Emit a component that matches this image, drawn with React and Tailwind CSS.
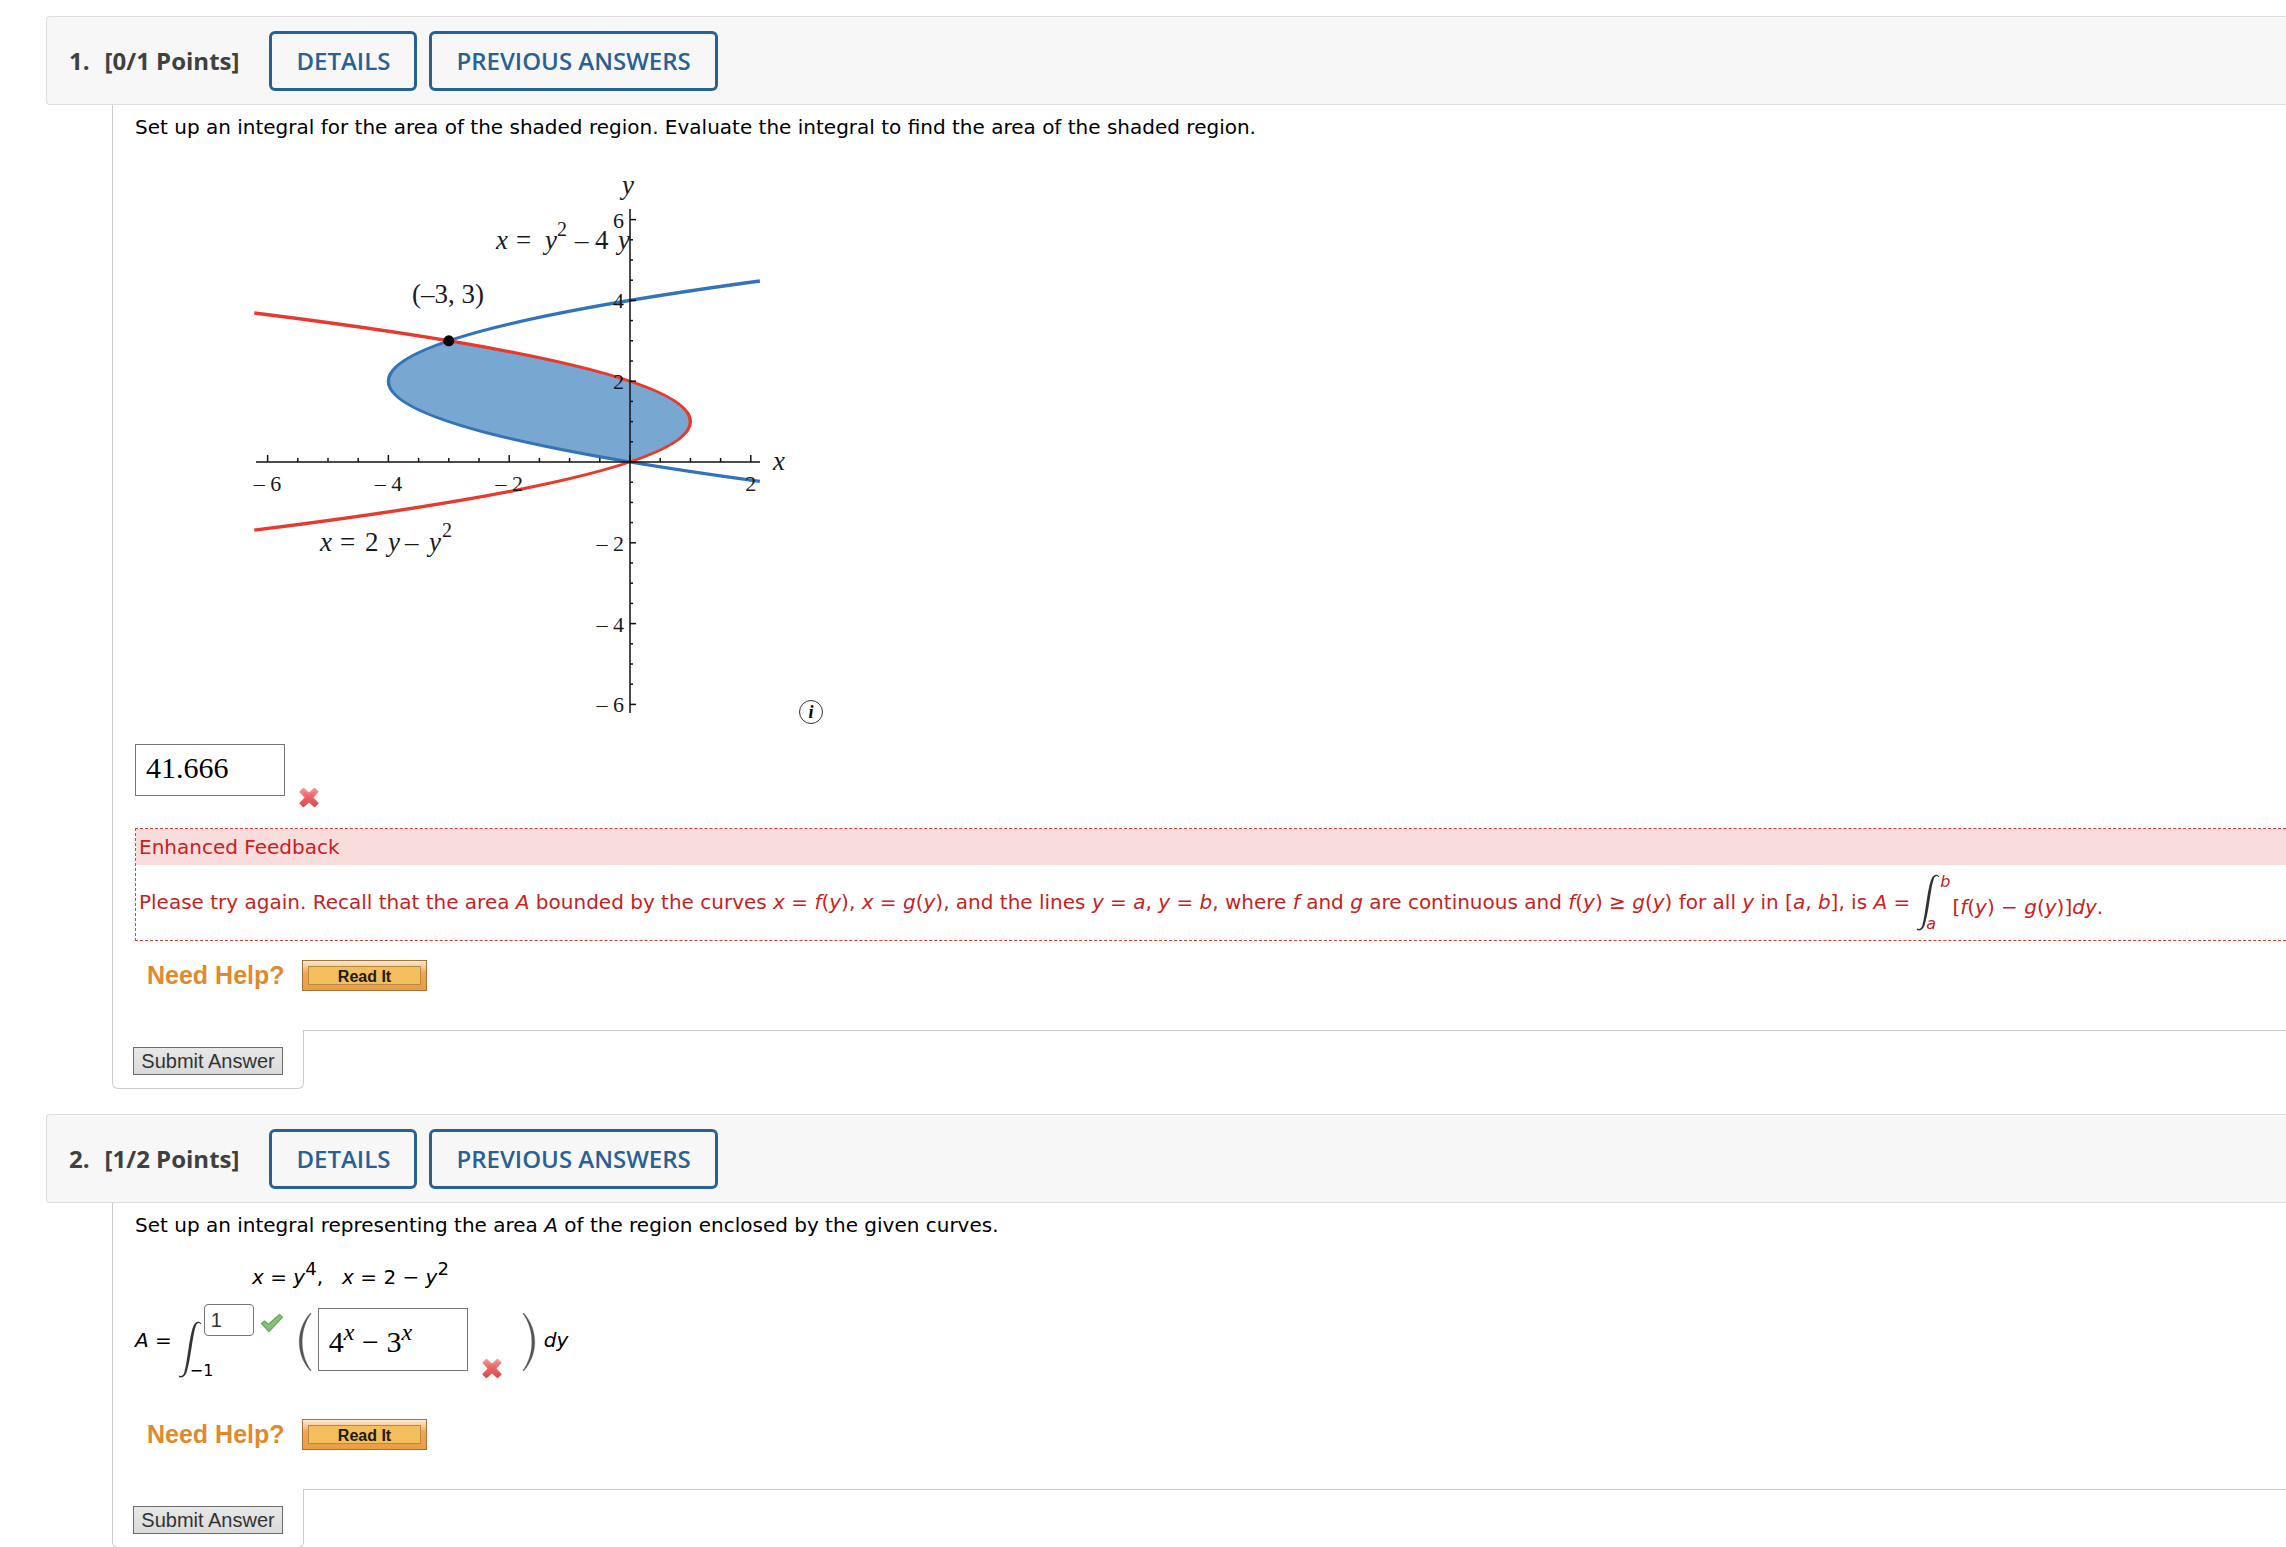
import React from "react";

const OX = 495;
const OY = 312;

const px = (x) => OX + x * 60.4;
const py = (y) => OY - y * 40.4;

// x = y^2 - 4y and x = 2y - y^2 as quadratic beziers between two y values
const blueTo = (a, b) =>
  `Q${px(a * b - 2 * (a + b))} ${py((a + b) / 2)} ${px(b * b - 4 * b)} ${py(b)}`;
const redTo = (a, b) =>
  `Q${px(a + b - a * b)} ${py((a + b) / 2)} ${px(2 * b - b * b)} ${py(b)}`;

const xTicks = Array.from({ length: 17 }, (_, i) => -6 + i / 2);
const yTicks = Array.from({ length: 25 }, (_, i) => -6 + i / 2);
const isMajor = (n) => n % 2 === 0;

const Graph = () => {
  const label = (n) => (n < 0 ? `– ${-n}` : n);

  return (
    <svg
      width="660"
      height="570"
      viewBox="0 0 660 570"
      role="img"
      aria-label="Region between two parabolas"
      className="shrink-0 font-['Liberation_Serif',serif]"
      fill="#1a1a1a"
    >
      <path
        d={`M${px(-3)} ${py(3)} ${blueTo(3, 0)} ${redTo(0, 3)}Z`}
        fill="#78a7d1"
      />
      <path
        d={`M${px(2.15)} ${py(-0.48)} ${blueTo(-0.48, 4.48)}`}
        fill="none"
        stroke="#3273b9"
        strokeWidth="3.4"
      />
      <path
        d={`M${px(-6.22)} ${py(-1.687)} ${redTo(-1.687, 3.687)}`}
        fill="none"
        stroke="#e8392f"
        strokeWidth="3.4"
      />
      <g stroke="#111" strokeWidth="1.5">
        <path d={`M121 ${OY}H625M${OX} 59V563`} />
        {xTicks.map((t) => (
          <path key={t} d={`M${px(t)} ${OY}v${isMajor(t) ? -7 : -4}`} />
        ))}
        {yTicks.map((t) => (
          <path key={t} d={`M${OX} ${py(t)}h${isMajor(t) ? 6 : 3}`} />
        ))}
      </g>
      <circle cx={px(-3)} cy={py(3)} r="5.5" fill="#000" />

      <g fontSize="22" textAnchor="middle">
        {[-6, -4, -2, 2].map((t) => (
          <text key={t} x={px(t)} y="341">
            {label(t)}
          </text>
        ))}
      </g>
      <g fontSize="22" textAnchor="end">
        {[-6, -4, -2, 2, 4, 6].map((t) => (
          <text key={t} x="489" y={py(t) + 8}>
            {label(t)}
          </text>
        ))}
      </g>

      <g fontSize="27">
        <text x="487" y="44" fontStyle="italic">y</text>
        <text x="638" y="320" fontStyle="italic">x</text>
        <text x="277" y="153">(–3, 3)</text>
        <text y="99">
          <tspan x="361" fontStyle="italic">x</tspan>
          <tspan x="381">=</tspan>
          <tspan x="410" fontStyle="italic">y</tspan>
          <tspan x="422" y="86" fontSize="20">2</tspan>
          <tspan x="440" y="99">–</tspan>
          <tspan x="460">4</tspan>
          <tspan x="483" fontStyle="italic">y</tspan>
        </text>
        <text y="401">
          <tspan x="185" fontStyle="italic">x</tspan>
          <tspan x="205">=</tspan>
          <tspan x="230">2</tspan>
          <tspan x="253" fontStyle="italic">y</tspan>
          <tspan x="270">–</tspan>
          <tspan x="294" fontStyle="italic">y</tspan>
          <tspan x="307" y="387" fontSize="20">2</tspan>
        </text>
      </g>
    </svg>
  );
};

const Wrong = () => (
  <svg width="20" height="21" viewBox="0 0 20 21" role="img" aria-label="Incorrect" className="shrink-0">
    <defs>
      <linearGradient id="wrong" x1="0" y1="0" x2="0" y2="1">
        <stop offset="0" stopColor="#f39a9a" />
        <stop offset="0.5" stopColor="#e86464" />
        <stop offset="1" stopColor="#dd4a4a" />
      </linearGradient>
    </defs>
    <path
      d="M4.500 1.500 10 6.600 15.500 1.500 18.800 4.800 13.400 10.500 18.800 16.200 15.600 19.500 10 14.300 4.400 19.500 1.200 16.200 6.600 10.500 1.200 4.800Z"
      fill="url(#wrong)"
      stroke="url(#wrong)"
      strokeWidth="1.6"
      strokeLinejoin="round"
    />
    <path
      d="M4.600 4.800 10 10.300 15.400 4.800M5 16 10 10.900 15 16"
      fill="none"
      stroke="#e25a5a"
      strokeWidth="1"
      opacity="0.6"
    />
  </svg>
);

const Right = () => (
  <svg width="24" height="20" viewBox="0 0 24 20" role="img" aria-label="Correct" className="shrink-0">
    <path
      d="M1.500 10.500 4.500 8 8.500 11.200 19.500 1.500 22.500 4.200 9 18.500Z"
      fill="#85c277"
      stroke="#68a95d"
      strokeWidth="1.2"
      strokeLinejoin="round"
    />
  </svg>
);

const Integral = () => (
  <svg width="24" height="58" viewBox="0 0 24 58" aria-hidden="true" className="shrink-0">
    <path
      d="M22.500 3.200C21.500 1.500 19 1.500 17.800 5 14.500 14 12.500 41 8.500 51.500 6.800 56 3.500 57.300 .8 56L1.200 54.600C3.500 55.600 5.300 54.500 6.300 51.500 9.500 41 11.500 13 15.700 4.500 17.500 .2 21.500-.2 23.200 2.400Z"
      fill="#333"
    />
  </svg>
);

const Paren = ({ flip }) => (
  <svg width="14" height="60" viewBox="0 0 14 60" aria-hidden="true" className="shrink-0">
    <path
      d={
        flip
          ? "M1.500 1C16.500 17 16.500 43 1.500 59L.8 58.400C12.800 43 12.800 17 .8 1.600Z"
          : "M12.500 1C-2.500 17-2.500 43 12.500 59L13.200 58.400C1.200 43 1.200 17 13.200 1.600Z"
      }
      fill="#555"
      stroke="#555"
      strokeWidth="0.3"
    />
  </svg>
);

const HeaderButton = ({ children }) => (
  <button
    type="button"
    className="h-[60px] rounded-md border-[3px] border-[#286195] px-6 text-2xl font-semibold text-[#286195]"
  >
    {children}
  </button>
);

const Question = ({ number, points, children }) => (
  <section className="mb-[25px]">
    <header className="flex h-[89px] items-center rounded-l border border-r-0 border-[#ddd] bg-[#f7f7f7] pl-[22px] font-['Open_Sans',sans-serif]">
      <h2 className="mr-[30px] flex gap-[15px] text-2xl font-bold text-[#404040]">
        <span>{number}.</span>
        <span>{points}</span>
      </h2>
      <div className="flex gap-3">
        <HeaderButton>DETAILS</HeaderButton>
        <HeaderButton>PREVIOUS ANSWERS</HeaderButton>
      </div>
    </header>
    <div className="ml-[66px]">
      <div className="border-l border-[#ccc] pt-2 pl-[22px]">
        {children}
        <div className="flex items-center pt-[19px] pb-[39px] pl-3">
          <span className="w-[155px] font-['Liberation_Sans',sans-serif] text-[25px] leading-[31px] font-bold text-[#e08a30]">
            Need Help?
          </span>
          <button
            type="button"
            className="h-[31px] w-[125px] border border-[#a8703a] bg-linear-to-b from-[#fdebd3] via-[#f0a653] via-40% to-[#ec9c45] p-[5px]"
          >
            <span className="flex h-full items-center justify-center border border-[#b58a45] bg-[#f2bf5c] pt-0.5 font-['Liberation_Sans',sans-serif] text-base leading-none font-bold text-[#221a08]">
              Read It
            </span>
          </button>
        </div>
      </div>
      <div className="flex">
        <div className="w-48 rounded-b-md border border-t-0 border-[#ccc] pt-[17px] pb-[13px] pl-5">
          <button
            type="button"
            className="h-7 w-[150px] border border-[#6b6b6b] bg-linear-to-b from-[#e8e8e8] to-[#dadada] font-['Liberation_Sans',sans-serif] text-xl leading-none text-[#333]"
          >
            Submit Answer
          </button>
        </div>
        <div className="grow border-t border-[#ccc]" />
      </div>
    </div>
  </section>
);

const App = () => {
  return (
    <main className="h-screen overflow-hidden bg-white pt-4 pl-[46px] font-['DejaVu_Sans',sans-serif] text-xl leading-7 text-black">
      <Question number="1" points="[0/1 Points]">
        <p>
          Set up an integral for the area of the shaded region. Evaluate the
          integral to find the area of the shaded region.
        </p>
        <div className="mt-[9px] flex items-end">
          <Graph />
          <button
            type="button"
            aria-label="Image description"
            className="mb-[-4px] ml-1 size-6 rounded-full border border-[#333] font-['Liberation_Serif',serif] text-lg leading-none font-bold italic"
          >
            i
          </button>
        </div>
        <div className="mt-6 flex items-end">
          <input
            type="text"
            aria-label="Area"
            defaultValue="41.666"
            className="h-[52px] w-[150px] border border-[#767676] px-2.5 pb-1 font-['Liberation_Serif',serif] text-3xl"
          />
          <span className="mb-[-12px] ml-[14px]">
            <Wrong />
          </span>
        </div>
        <div className="mt-8 border border-r-0 border-dashed border-[#e8392f] text-[#c9211e]">
          <h3 className="bg-[#f9dcdc] px-[3px] py-1">Enhanced Feedback</h3>
          <p className="flex items-center pt-[9px] pb-2 pl-[3px] whitespace-nowrap">
            <span className="pb-0.5">
              Please try again. Recall that the area <i>A</i> bounded by the
              curves <i>x</i> = <i>f</i>(<i>y</i>), <i>x</i> = <i>g</i>(
              <i>y</i>), and the lines <i>y</i> = <i>a</i>, <i>y</i> = <i>b</i>,
              where <i>f</i> and <i>g</i> are continuous and <i>f</i>(<i>y</i>)
              ≥ <i>g</i>(<i>y</i>) for all <i>y</i> in [<i>a</i>, <i>b</i>], is{" "}
              <i>A</i> =
            </span>
            <span className="ml-1.5 flex">
              <Integral />
              <span className="flex flex-col justify-between text-base leading-4 italic">
                <span>b</span>
                <span className="-ml-3.5">a</span>
              </span>
            </span>
            <span className="ml-0.5 pt-2">
              [<i>f</i>(<i>y</i>) − <i>g</i>(<i>y</i>)]<i>dy</i>.
            </span>
          </p>
        </div>
      </Question>

      <Question number="2" points="[1/2 Points]">
        <p>
          Set up an integral representing the area <i>A</i> of the region
          enclosed by the given curves.
        </p>
        <p className="mt-6 h-7 pl-[117px] whitespace-pre">
          <i>x</i> = <i>y</i>
          <sup className="text-lg leading-none">4</sup>,{"   "}
          <i>x</i> = 2 − <i>y</i>
          <sup className="text-lg leading-none">2</sup>
        </p>
        <div className="mt-[13px] mb-[21px] flex items-center">
          <span className="pb-1">
            <i>A</i> =
          </span>
          <span className="mt-4 ml-1.5">
            <Integral />
          </span>
          <div className="ml-0.5 flex h-[75px] flex-col justify-between">
            <div className="flex items-center gap-1.5">
              <input
                type="text"
                aria-label="Upper limit"
                defaultValue="1"
                className="h-8 w-[50px] rounded border border-[#767676] px-1.5 font-['Liberation_Sans',sans-serif] text-xl text-[#333]"
              />
              <span className="pt-1.5">
                <Right />
              </span>
            </div>
            <span className="-ml-3.5 text-base leading-4">−1</span>
          </div>
          <div className="ml-3.5 flex items-center">
            <Paren />
            <div
              role="textbox"
              tabIndex={0}
              aria-label="Integrand"
              className="mb-1 ml-1.5 flex h-[63px] w-[150px] items-center border border-[#767676] px-2.5 pt-1 font-['Liberation_Serif',serif] text-3xl"
            >
              <span>
                4<sup className="text-2xl leading-none italic">x</sup> − 3
                <sup className="text-2xl leading-none italic">x</sup>
              </span>
            </div>
          </div>
          <span className="mr-5 ml-[14px] self-end">
            <Wrong />
          </span>
          <Paren flip />
          <i className="ml-2 pb-1">dy</i>
        </div>
      </Question>
    </main>
  );
};

export default App;
